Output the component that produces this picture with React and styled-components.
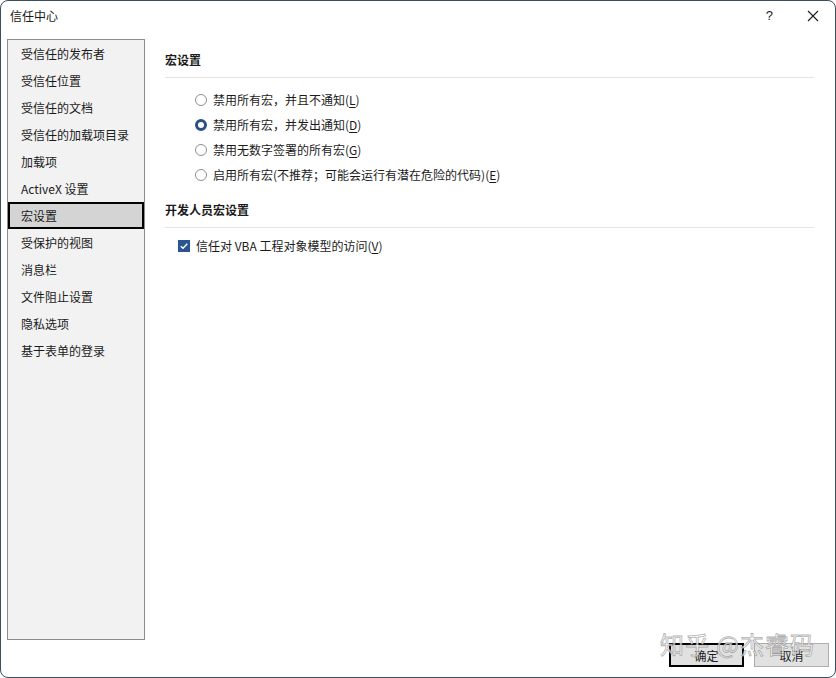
import React from 'react'
import styled, { createGlobalStyle } from 'styled-components'

const GlobalStyle = createGlobalStyle`
  html, body {
    margin: 0;
    padding: 0;
    background: #ffffff;
  }
  body {
    font-family: "Noto Sans CJK SC", "Noto Sans", sans-serif;
    font-size: 12px;
    color: #1b1b1b;
  }
`

const navItems = [
  '受信任的发布者',
  '受信任位置',
  '受信任的文档',
  '受信任的加载项目录',
  '加载项',
  'ActiveX 设置',
  '宏设置',
  '受保护的视图',
  '消息栏',
  '文件阻止设置',
  '隐私选项',
  '基于表单的登录',
]

const macroOptions = [
  { label: '禁用所有宏，并且不通知', key: 'L', checked: false },
  { label: '禁用所有宏，并发出通知', key: 'D', checked: true },
  { label: '禁用无数字签署的所有宏', key: 'G', checked: false },
  { label: '启用所有宏(不推荐；可能会运行有潜在危险的代码)', key: 'E', checked: false },
]

function App() {
  return (
    <>
      <GlobalStyle />
      <Window>
        <TitleBar>
          <Title>信任中心</Title>
          <TitleButtons>
            <HelpButton>?</HelpButton>
            <CloseButton>
              <svg width="12" height="12" viewBox="0 0 12 12">
                <path d="M1 1 L11 11 M11 1 L1 11" stroke="#1b1b1b" strokeWidth="1.1" fill="none" />
              </svg>
            </CloseButton>
          </TitleButtons>
        </TitleBar>

        <Main>
          <Sidebar>
            {navItems.map((item) => (
              <NavItem key={item} $active={item === '宏设置'}>{item}</NavItem>
            ))}
          </Sidebar>

          <Content>
            <SectionHeading>宏设置</SectionHeading>
            <OptionList>
              {macroOptions.map((opt) => (
                <OptionRow key={opt.key}>
                  <Radio $checked={opt.checked} />
                  <span>
                    {opt.label}(<Underline>{opt.key}</Underline>)
                  </span>
                </OptionRow>
              ))}
            </OptionList>

            <SectionHeading $second>开发人员宏设置</SectionHeading>
            <CheckRow>
              <CheckBox>
                <svg width="10" height="10" viewBox="0 0 10 10">
                  <path d="M1.8 5.2 L4 7.3 L8.3 2.8" stroke="#ffffff" strokeWidth="1.4" fill="none" />
                </svg>
              </CheckBox>
              <span>
                信任对 VBA 工程对象模型的访问(<Underline>V</Underline>)
              </span>
            </CheckRow>
          </Content>
        </Main>

        <Footer>
          <DialogButton $default>确定</DialogButton>
          <DialogButton>取消</DialogButton>
        </Footer>

        <Watermark>知乎 @杰睿码</Watermark>
      </Window>
    </>
  )
}

const Window = styled.div`
  position: relative;
  width: 836px;
  height: 678px;
  box-sizing: border-box;
  border: 1px solid #3a4f63;
  border-radius: 8px;
  background: #ffffff;
  display: flex;
  flex-direction: column;
  overflow: hidden;
`

const TitleBar = styled.div`
  height: 29px;
  display: flex;
  align-items: center;
  justify-content: space-between;
  padding-left: 9px;
  padding-right: 16px;
`

const Title = styled.div`
  font-size: 12px;
  color: #1b1b1b;
`

const TitleButtons = styled.div`
  display: flex;
  align-items: center;
  gap: 34px;
`

const HelpButton = styled.span`
  font-family: "Liberation Sans", sans-serif;
  font-size: 13px;
  color: #1b1b1b;
`

const CloseButton = styled.span`
  display: flex;
  align-items: center;
`

const Main = styled.div`
  display: flex;
  padding: 9px 7px 0 6px;
  height: 601px;
`

const Sidebar = styled.div`
  width: 138px;
  flex-shrink: 0;
  box-sizing: border-box;
  background: #f2f2f2;
  border: 1px solid #8c8c8c;
  display: flex;
  flex-direction: column;
`

const NavItem = styled.div`
  height: 27px;
  box-sizing: border-box;
  display: flex;
  align-items: center;
  padding-left: ${(p) => (p.$active ? '11px' : '13px')};
  font-size: 12px;
  color: #1b1b1b;
  background: ${(p) => (p.$active ? '#d4d4d4' : 'transparent')};
  border: ${(p) => (p.$active ? '2px solid #000000' : 'none')};
`

const Content = styled.div`
  flex: 1;
  padding-left: 20px;
  padding-right: 14px;
`

const SectionHeading = styled.div`
  padding-top: ${(p) => (p.$second ? '15px' : '13px')};
  padding-bottom: 9px;
  line-height: 16px;
  font-size: 12px;
  font-weight: 600;
  color: #1b1b1b;
  border-bottom: 1px solid #e3e3e3;
`

const OptionList = styled.div`
  margin-top: 9px;
  padding-left: 30px;
  display: flex;
  flex-direction: column;
`

const OptionRow = styled.div`
  height: 25px;
  display: flex;
  align-items: center;
  gap: 6px;
  color: #1b1b1b;
`

const Radio = styled.span`
  width: 12px;
  height: 12px;
  box-sizing: border-box;
  border-radius: 50%;
  flex-shrink: 0;
  background: #ffffff;
  border: ${(p) => (p.$checked ? '3.5px solid #2b4f83' : '1px solid #8f8f8f')};
`

const Underline = styled.span`
  text-decoration: underline;
  text-underline-offset: 2px;
`

const CheckRow = styled.div`
  margin-top: 5px;
  height: 25px;
  padding-left: 13px;
  display: flex;
  align-items: center;
  gap: 6px;
`

const CheckBox = styled.span`
  width: 12px;
  height: 12px;
  flex-shrink: 0;
  background: #2b5590;
  display: flex;
  align-items: center;
  justify-content: center;
`

const Footer = styled.div`
  display: flex;
  justify-content: flex-end;
  gap: 10px;
  padding: 3px 6px 0 0;
`

const DialogButton = styled.div`
  width: 75px;
  height: 24px;
  box-sizing: border-box;
  display: flex;
  align-items: center;
  justify-content: center;
  background: #e1e1e1;
  font-size: 12px;
  color: #1b1b1b;
  border: ${(p) => (p.$default ? '2px solid #000000' : '1px solid #adadad')};
`

const Watermark = styled.div`
  position: absolute;
  right: 20px;
  bottom: 16px;
  font-size: 24px;
  letter-spacing: 1px;
  color: rgba(255, 255, 255, 0.75);
  -webkit-text-stroke: 0.8px rgba(120, 120, 120, 0.6);
  pointer-events: none;
`

export default App
